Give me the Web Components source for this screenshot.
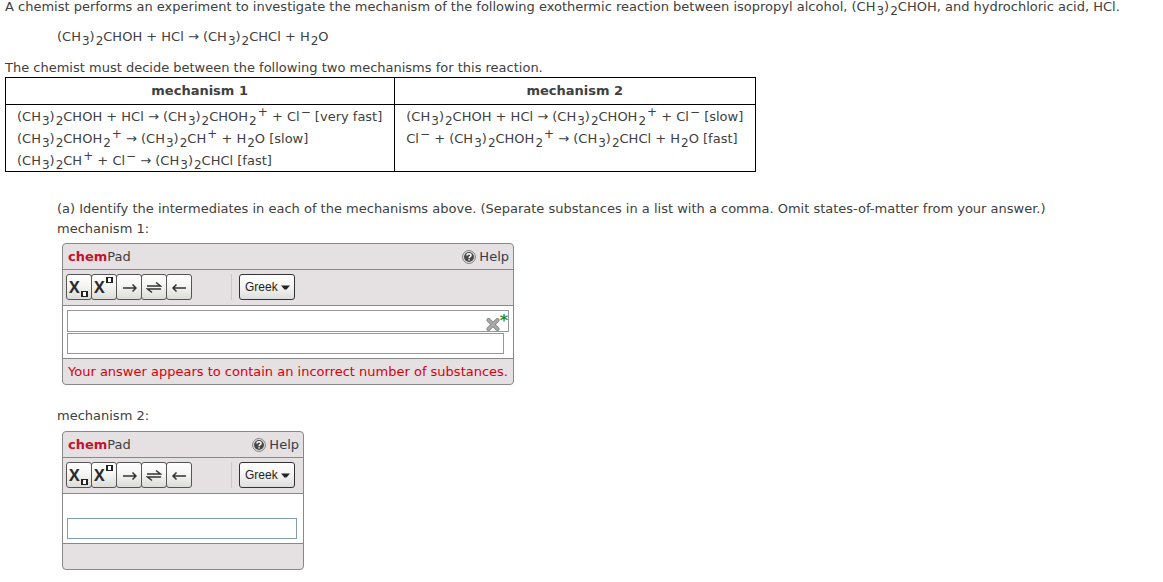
<!DOCTYPE html>
<html lang="en">
<head>
<meta charset="utf-8">
<title>Reaction mechanisms</title>
<style>
body { margin: 0; background: #fff; color: #404040; font: 13px/20px "DejaVu Sans", Verdana, sans-serif; }
</style>
</head>
<body>
<chem-question></chem-question>

<template id="formula"><style>
:host { display: inline; white-space: nowrap; }
::slotted(sub), ::slotted(sup) { padding-left: 1px; font-size: 12px; line-height: 0; position: relative; vertical-align: baseline; }
::slotted(sub) { top: 4px; }
::slotted(sup) { top: -5px; }
</style><slot></slot></template>

<template id="pad">
<style>
:host { display: block; width: fit-content; box-sizing: border-box; border: 1px solid #888; border-radius: 4px; background: #e5e1e2; overflow: hidden; }
header { display: flex; justify-content: space-between; align-items: center; height: 25px; padding: 0 4px 0 5px; border-bottom: 1px solid #888; }
b { color: #c41230; }
a { display: flex; align-items: center; gap: 3px; color: #333c50; text-decoration: none; }
.tools { display: flex; align-items: flex-start; height: 31px; padding: 4px 3px 0; border-bottom: 1px solid #888; }
button { display: grid; place-items: center; width: 26px; height: 26px; margin: 0 -1px 0 0; padding: 0; border: 1px solid #555; border-radius: 3px; background: linear-gradient(#fff, #f5f5f3 45%, #dcdcd8); color: #2b2b2b; }
.x { display: flex; gap: 1px; width: 20px; height: 20px; align-items: center; font: bold 16px/20px "Open Sans", sans-serif; }
.x i { flex: none; box-sizing: border-box; width: 7px; height: 6px; border: 1px solid #222; border-width: 1px 2px; background: #fff; }
.sub i { align-self: flex-end; }
.sup i { align-self: flex-start; }
.greek { position: relative; margin-left: 40px; padding: 0 0 0 7px; border-left: 1px solid #ccc8ca; height: 26px; }
select { appearance: none; display: block; box-sizing: border-box; width: 56px; height: 26px; padding: 0 0 0 5px; border: 1px solid #333; border-radius: 3px; background: linear-gradient(#fff, #f5f5f3 45%, #dedede); color: #222; font: 12px "Liberation Sans", Arial, sans-serif; }
.caret { position: absolute; right: 5px; top: 11px; pointer-events: none; }
.body { display: flex; flex-direction: column; gap: 1px; padding: 4px; background: #fff; border-bottom: 1px solid #888; }
.preview { display: flex; justify-content: flex-end; align-items: center; box-sizing: border-box; height: 22px; border: 1px solid transparent; }
:host([answered]) .preview { border-color: #999; }
:host(:not([answered])) .preview { height: 19px; }
:host(:not([answered])) .mark { display: none; }
.mark { display: flex; align-items: center; height: 20px; color: #2e8b2e; font: bold 16px/26px "DejaVu Sans", sans-serif; }
.mark svg { margin-top: 6px; }
input { box-sizing: border-box; height: 21px; width: auto; margin: 0 5px 0 0; padding: 0 3px; border: 1px solid #7f9db9; background: #fff; font: inherit; }
:host(:not([answered])) input { width: 230px; margin-right: 2px; }
footer { min-height: 25px; padding: 0 5px; line-height: 25px; color: #d9000d; white-space: nowrap; }
</style>
<header><span><b>chem</b>Pad</span>
<a href="#help"><svg width="14" height="14" viewBox="0 0 14 14" aria-hidden="true"><circle cx="7" cy="7" r="6.4" fill="#eee" stroke="#777"/><circle cx="7" cy="7" r="5" fill="#484848"/><path d="M5 5.5C5 3.3 9 3.3 9 5.5C9 6.8 7.1 6.7 7.1 8.2M7.1 9.2V10.6" fill="none" stroke="#fff" stroke-width="1.5"/></svg>Help</a></header>
<div class="tools">
<button type="button" aria-label="Subscript"><span class="x sub">X<i></i></span></button>
<button type="button" aria-label="Superscript"><span class="x sup">X<i></i></span></button>
<button type="button" aria-label="Right arrow"><svg width="16" height="16" viewBox="0 0 16 16" fill="none" stroke="#333" stroke-width="1.5"><path d="M2 9H15M11.5 5.5L15 9L11.5 12.5"/></svg></button>
<button type="button" aria-label="Equilibrium arrows"><svg width="16" height="16" viewBox="0 0 16 16" fill="none" stroke="#333" stroke-width="1.5"><path d="M1 7H14.5L10 3.5M15 10H1.5L6 13.5"/></svg></button>
<button type="button" aria-label="Left arrow"><svg width="16" height="16" viewBox="0 0 16 16" fill="none" stroke="#333" stroke-width="1.5"><path d="M15 9H2M5.5 5.5L2 9L5.5 12.5"/></svg></button>
<div class="greek"><select aria-label="Greek letters"><option>Greek</option></select><svg class="caret" width="9" height="5" viewBox="0 0 9 5" aria-hidden="true"><path d="M0 .5H9L5.5 4.5H3.5Z" fill="#222"/></svg></div>
</div>
<div class="body"><div class="preview"><span class="mark"><svg width="14" height="13" viewBox="0 0 14 13" aria-label="Incorrect"><path d="M2.5 2L11.5 11M11.5 2L2.5 11" stroke="#888" stroke-width="4" stroke-linecap="round"/><path d="M2.5 2L11.5 11M11.5 2L2.5 11" stroke="#aaa" stroke-width="2.4" stroke-linecap="round"/></svg>*</span></div><input type="text" aria-label="Answer"></div>
<footer><slot></slot></footer>
</template>

<template id="mechanisms">
<style>
:host { display: block; }
table { border-collapse: collapse; line-height: 22px; }
th, td { border: 1px solid #000; padding: 0 12px 0 11px; text-align: left; vertical-align: top; white-space: nowrap; }
th { height: 26px; text-align: center; vertical-align: middle; }
td { padding-top: 1px; }
div { height: 22px; }
div:last-child { height: 21px; }
</style>
<table>
<thead><tr><th>mechanism 1</th><th>mechanism 2</th></tr></thead>
<tbody><tr>
<td><div><chem-formula>(CH<sub>3</sub>)<sub>2</sub>CHOH + HCl → (CH<sub>3</sub>)<sub>2</sub>CHOH<sub>2</sub><sup>+</sup> + Cl<sup>−</sup> [very fast]</chem-formula></div>
<div><chem-formula>(CH<sub>3</sub>)<sub>2</sub>CHOH<sub>2</sub><sup>+</sup> → (CH<sub>3</sub>)<sub>2</sub>CH<sup>+</sup> + H<sub>2</sub>O [slow]</chem-formula></div>
<div><chem-formula>(CH<sub>3</sub>)<sub>2</sub>CH<sup>+</sup> + Cl<sup>−</sup> → (CH<sub>3</sub>)<sub>2</sub>CHCl [fast]</chem-formula></div></td>
<td><div><chem-formula>(CH<sub>3</sub>)<sub>2</sub>CHOH + HCl → (CH<sub>3</sub>)<sub>2</sub>CHOH<sub>2</sub><sup>+</sup> + Cl<sup>−</sup> [slow]</chem-formula></div>
<div><chem-formula>Cl<sup>−</sup> + (CH<sub>3</sub>)<sub>2</sub>CHOH<sub>2</sub><sup>+</sup> → (CH<sub>3</sub>)<sub>2</sub>CHCl + H<sub>2</sub>O [fast]</chem-formula></div></td>
</tr></tbody>
</table>
</template>

<template id="question">
<style>
:host { display: block; padding: 0 5px; }
p { margin: 0; }
.intro { line-height: 14px; }
.reaction { margin: 13px 0 12px 52px; }
.lead { line-height: 18px; }
.parts { margin: 27px 0 0 52px; }
chem-pad { margin: 4px 0 0 5px; }
.next { margin-top: 21px; }
.next + chem-pad { margin-top: 5px; }
</style>
<p class="intro">A chemist performs an experiment to investigate the mechanism of the following exothermic reaction between isopropyl alcohol, <chem-formula>(CH<sub>3</sub>)<sub>2</sub>CHOH</chem-formula>, and hydrochloric acid, HCl.</p>
<p class="reaction"><chem-formula>(CH<sub>3</sub>)<sub>2</sub>CHOH + HCl → (CH<sub>3</sub>)<sub>2</sub>CHCl + H<sub>2</sub>O</chem-formula></p>
<p class="lead">The chemist must decide between the following two mechanisms for this reaction.</p>
<mechanism-table></mechanism-table>
<section class="parts">
<p>(a) Identify the intermediates in each of the mechanisms above. (Separate substances in a list with a comma. Omit states-of-matter from your answer.)</p>
<p>mechanism 1:</p>
<chem-pad answered>Your answer appears to contain an incorrect number of substances.</chem-pad>
<p class="next">mechanism 2:</p>
<chem-pad></chem-pad>
</section>
</template>

<script>
function define(name, templateId) {
  customElements.define(name, class extends HTMLElement {
    constructor() {
      super();
      this.attachShadow({ mode: "open" }).append(document.getElementById(templateId).content.cloneNode(true));
    }
  });
}
define("chem-formula", "formula");
define("chem-pad", "pad");
define("mechanism-table", "mechanisms");
define("chem-question", "question");
</script>
</body>
</html>
